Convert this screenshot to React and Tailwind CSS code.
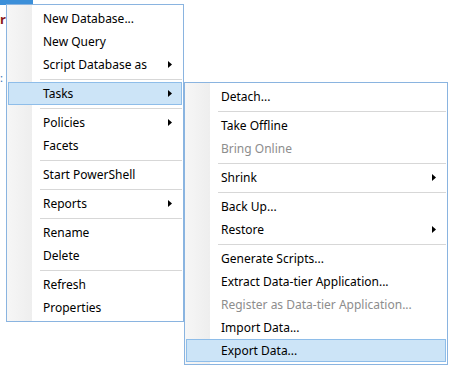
import React from 'react';

const mainItems = [
  { label: 'New Database...' },
  { label: 'New Query' },
  { label: 'Script Database as', sub: true },
  { sep: true },
  { label: 'Tasks', sub: true, active: true },
  { sep: true },
  { label: 'Policies', sub: true },
  { label: 'Facets' },
  { sep: true },
  { label: 'Start PowerShell' },
  { sep: true },
  { label: 'Reports', sub: true },
  { sep: true },
  { label: 'Rename' },
  { label: 'Delete' },
  { sep: true },
  { label: 'Refresh' },
  { label: 'Properties' },
];

const taskItems = [
  { label: 'Detach...' },
  { sep: true },
  { label: 'Take Offline' },
  { label: 'Bring Online', disabled: true },
  { sep: true },
  { label: 'Shrink', sub: true },
  { sep: true },
  { label: 'Back Up...' },
  { label: 'Restore', sub: true },
  { sep: true },
  { label: 'Generate Scripts...' },
  { label: 'Extract Data-tier Application...' },
  { label: 'Register as Data-tier Application...', disabled: true },
  { label: 'Import Data...' },
  { label: 'Export Data...', active: true },
];

const Arrow = () => (
  <svg width="4" height="7" viewBox="0 0 4 7" className="shrink-0">
    <path d="M0 0 L4 3.5 L0 7 Z" fill="#000" />
  </svg>
);

const MenuRow = ({ item }) => {
  if (item.sep) {
    return (
      <div className="h-[6px] pt-[3px] pl-[33px] pr-[1px]">
        <div className="h-px bg-[#d7d7d7]"></div>
      </div>
    );
  }
  return (
    <div
      className={`h-[23px] mx-px flex items-center justify-between pl-[34px] pr-[9px] border ${
        item.active ? 'bg-[#cce4f7] border-[#8ebde9]' : 'border-transparent'
      }`}
    >
      <span className={item.disabled ? 'text-[#8d8d8d]' : 'text-black'}>{item.label}</span>
      {item.sub && <Arrow />}
    </div>
  );
};

const Menu = ({ items, className }) => (
  <div className={`relative bg-white border border-[#8ab4e0] py-[2px] ${className}`}>
    <div className="absolute left-0 top-0 bottom-0 w-[25px] bg-gradient-to-r from-[#f6f6f6] to-[#eeeeee]"></div>
    <div className="relative">
      {items.map((item, i) => (
        <MenuRow key={i} item={item} />
      ))}
    </div>
  </div>
);

export default function App() {
  return (
    <div
      className="relative w-[474px] h-[381px] bg-white overflow-hidden text-[12px] leading-none"
      style={{ fontFamily: '"Noto Sans", "Segoe UI", sans-serif' }}
    >
      {/* tree view behind the menu */}
      <div className="absolute left-0 top-0 w-[33px] h-[5px] bg-[#3b8fd9]"></div>
      <span className="absolute left-0 top-[13px] text-[13px] font-bold text-[#8b1a1a]">r</span>
      <span className="absolute left-0 top-[72px] text-[11px] text-[#2f6fb5]">:</span>

      <div className="relative flex items-start pt-[4px] pl-[6px]">
        <Menu items={mainItems} className="w-[178px]" />
        <Menu items={taskItems} className="w-[264px] mt-[78px]" />
      </div>
    </div>
  );
}
